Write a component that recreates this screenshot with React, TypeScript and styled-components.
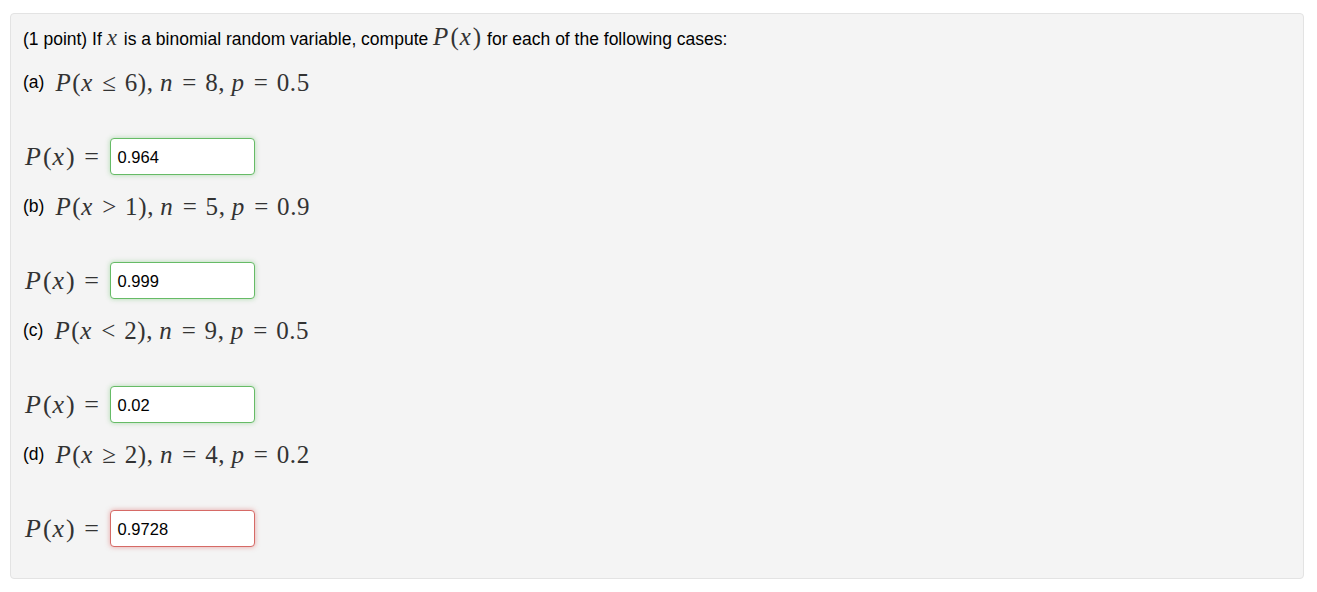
import React from "react";
import styled, { createGlobalStyle } from "styled-components";

const Global = createGlobalStyle`
  body {
    margin: 0;
    background: #ffffff;
    font-family: "Liberation Sans", Arial, sans-serif;
  }
`;

const Page = styled.div`
  padding: 13px 13px 14px 10px;
`;

const Panel = styled.div`
  box-sizing: border-box;
  width: 1294px;
  height: 566px;
  background: #f4f4f4;
  border: 1px solid #e3e3e3;
  border-radius: 4px;
  padding: 9px 12px 30px 12px;
  display: flex;
  flex-direction: column;
`;

const Intro = styled.div`
  font-size: 17.5px;
  line-height: 28px;
  color: #000;
  white-space: nowrap;
`;

const Part = styled.div`
  display: flex;
  flex-direction: column;
`;

const Question = styled.div<{ first?: boolean }>`
  margin-top: ${(p) => (p.first ? "14px" : "16px")};
  height: 31px;
  display: flex;
  align-items: center;
  font-size: 17.5px;
  color: #000;
`;

const Letter = styled.span`
  margin-right: 11px;
`;

const AnswerRow = styled.div`
  margin-top: 40px;
  display: flex;
  align-items: center;
  height: 37px;
  padding-left: 2px;
`;

const MathText = styled.span<{ size?: number; spacing?: number }>`
  font-family: "Liberation Serif", "DejaVu Serif", serif;
  font-size: ${(p) => p.size ?? 24}px;
  letter-spacing: ${(p) => p.spacing ?? 0.6}px;
  color: #333;
  white-space: nowrap;
`;

const V = styled.i`
  font-style: italic;
  padding-right: 1px;
`;

const Rel = styled.span`
  margin: 0 0.33em;
`;

const Comma = styled.span`
  margin-right: 0.25em;
`;

const AnswerBox = styled.div<{ state: "ok" | "bad" }>`
  box-sizing: border-box;
  width: 145px;
  height: 37px;
  margin-left: 1px;
  background: #fff;
  border-radius: 4px;
  border: 1px solid ${(p) => (p.state === "ok" ? "#66bb66" : "#d66a66")};
  box-shadow: 0 0 5px
    ${(p) => (p.state === "ok" ? "rgba(92,184,92,0.45)" : "rgba(217,83,79,0.5)")};
  display: flex;
  align-items: center;
  padding: 1px 0 0 7px;
  font-size: 16.5px;
  color: #000;
`;

const Px = () => (
  <>
    <V>P</V>(<V>x</V>)
  </>
);

type Item = {
  letter: string;
  rel: string;
  k: number;
  n: number;
  p: string;
  answer: string;
  state: "ok" | "bad";
};

const items: Item[] = [
  { letter: "a", rel: "≤", k: 6, n: 8, p: "0.5", answer: "0.964", state: "ok" },
  { letter: "b", rel: ">", k: 1, n: 5, p: "0.9", answer: "0.999", state: "ok" },
  { letter: "c", rel: "<", k: 2, n: 9, p: "0.5", answer: "0.02", state: "ok" },
  { letter: "d", rel: "≥", k: 2, n: 4, p: "0.2", answer: "0.9728", state: "bad" },
];

export default function App() {
  return (
    <Page>
      <Global />
      <Panel>
        <Intro>
          (1 point) If{" "}
          <MathText size={23} spacing={1}>
            <V>x</V>
          </MathText>{" "}
          is a binomial random variable, compute{" "}
          <MathText size={25} spacing={1}>
            <Px />
          </MathText>{" "}
          for each of the following cases:
        </Intro>
        {items.map((it, i) => (
          <Part key={it.letter}>
            <Question first={i === 0}>
              <Letter>({it.letter})</Letter>
              <MathText size={25}>
                <V>P</V>(<V>x</V>
                <Rel>{it.rel}</Rel>
                {it.k})<Comma>,</Comma>
                <V>n</V>
                <Rel>=</Rel>
                {it.n}
                <Comma>,</Comma>
                <V>p</V>
                <Rel>=</Rel>
                {it.p}
              </MathText>
            </Question>
            <AnswerRow>
              <MathText size={26} spacing={1}>
                <Px />
                <Rel>=</Rel>
              </MathText>
              <AnswerBox state={it.state}>{it.answer}</AnswerBox>
            </AnswerRow>
          </Part>
        ))}
      </Panel>
    </Page>
  );
}
